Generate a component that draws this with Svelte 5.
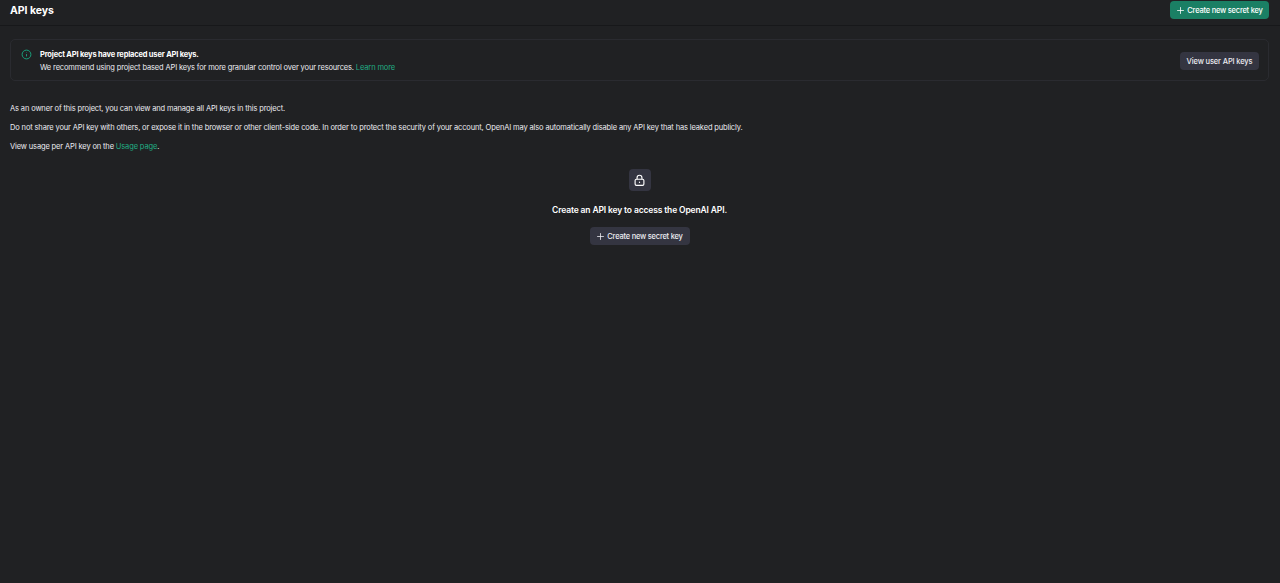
<script>
  const plus = "M8 2v12M2 8h12";
</script>

<div class="page">
  <header class="topbar">
    <h1>API keys</h1>
    <button class="btn primary">
      <svg viewBox="0 0 16 16" class="plus"><path d={plus} /></svg>
      Create new secret key
    </button>
  </header>

  <main class="content">
    <section class="banner">
      <svg class="info" viewBox="0 0 16 16">
        <circle cx="8" cy="8" r="6.4" />
        <path d="M8 7.4v3.4M8 5v.6" />
      </svg>
      <div class="banner-text">
        <strong>Project API keys have replaced user API keys.</strong>
        <span>We recommend using project based API keys for more granular control over your resources. <a href="#top">Learn more</a></span>
      </div>
      <button class="btn secondary">View user API keys</button>
    </section>

    <div class="notes">
      <p>As an owner of this project, you can view and manage all API keys in this project.</p>
      <p>Do not share your API key with others, or expose it in the browser or other client-side code. In order to protect the security of your account, OpenAI may also automatically disable any API key that has leaked publicly.</p>
      <p>View usage per API key on the <a href="#top">Usage page</a>.</p>
    </div>

    <div class="empty">
      <div class="lock-tile">
        <svg viewBox="0 0 16 16">
          <rect x="2.6" y="6.4" width="10.8" height="7.6" rx="1.6" />
          <path d="M5 6.4V4.6a3 3 0 0 1 6 0v1.8" />
          <path class="key" d="M8 9.4v1.6" />
        </svg>
      </div>
      <h2>Create an API key to access the OpenAI API.</h2>
      <button class="btn secondary wide">
        <svg viewBox="0 0 16 16" class="plus"><path d={plus} /></svg>
        Create new secret key
      </button>
    </div>
  </main>
</div>

<style>
  :global(body) {
    margin: 0;
    background: #202123;
  }

  .page {
    min-height: 583px;
    background: #202123;
    color: #ececf1;
    font-family: Inter, "Liberation Sans", sans-serif;
    font-size: 7.5px;
    letter-spacing: -0.14px;
    line-height: 11px;
  }

  .topbar {
    display: flex;
    justify-content: space-between;
    align-items: flex-start;
    height: 26px;
    padding: 1px 11px 0 10px;
    box-sizing: border-box;
    border-bottom: 1px solid #17181a;
  }

  h1 {
    margin: 2px 0 0;
    font-size: 10.5px;
    line-height: 15px;
    font-weight: 700;
    letter-spacing: -0.05px;
    color: #fff;
  }

  .btn {
    display: inline-flex;
    align-items: center;
    justify-content: center;
    gap: 2px;
    height: 18px;
    padding: 0 2px;
    border: 0;
    border-radius: 4px;
    font: inherit;
    font-weight: 500;
    letter-spacing: inherit;
    white-space: nowrap;
    color: #ececf1;
  }

  .primary {
    width: 99px;
    background: #1a7f64;
    color: #fff;
    letter-spacing: -0.22px;
  }

  .secondary {
    width: 79px;
    background: #343541;
  }

  .wide {
    width: 100px;
    letter-spacing: -0.22px;
  }

  .plus {
    width: 9px;
    height: 9px;
    fill: none;
    stroke: currentColor;
    stroke-width: 1.4;
  }

  .content {
    padding: 13px 11px 0 10px;
  }

  .banner {
    display: flex;
    align-items: center;
    height: 42px;
    box-sizing: border-box;
    padding: 2px 9px 0 10px;
    border: 1px solid #2a2b30;
    border-radius: 5px;
  }

  .info {
    align-self: flex-start;
    width: 11px;
    height: 11px;
    margin-top: 7px;
    fill: none;
    stroke: #19a37e;
    stroke-width: 1.4;
  }

  .banner-text {
    display: flex;
    flex-direction: column;
    gap: 2px;
    flex: 1;
    margin-left: 8px;
  }

  .banner-text strong {
    font-weight: 700;
    letter-spacing: -0.18px;
    color: #fff;
  }

  a {
    color: #20ad83;
    text-decoration: none;
  }

  .notes {
    margin-top: 22px;
  }

  .notes p {
    margin: 0 0 8px;
  }

  .empty {
    display: flex;
    flex-direction: column;
    align-items: center;
    margin-top: 17px;
  }

  .lock-tile {
    display: flex;
    align-items: center;
    justify-content: center;
    width: 22px;
    height: 22px;
    border-radius: 4px;
    background: #343541;
  }

  .lock-tile svg {
    width: 13px;
    height: 13px;
    fill: none;
    stroke: #fff;
    stroke-width: 1.4;
  }

  h2 {
    margin: 13px 0 0;
    font-size: 8.5px;
    line-height: 13px;
    font-weight: 600;
    letter-spacing: -0.14px;
    color: #fff;
  }

  .empty .btn {
    margin-top: 10px;
  }
</style>
